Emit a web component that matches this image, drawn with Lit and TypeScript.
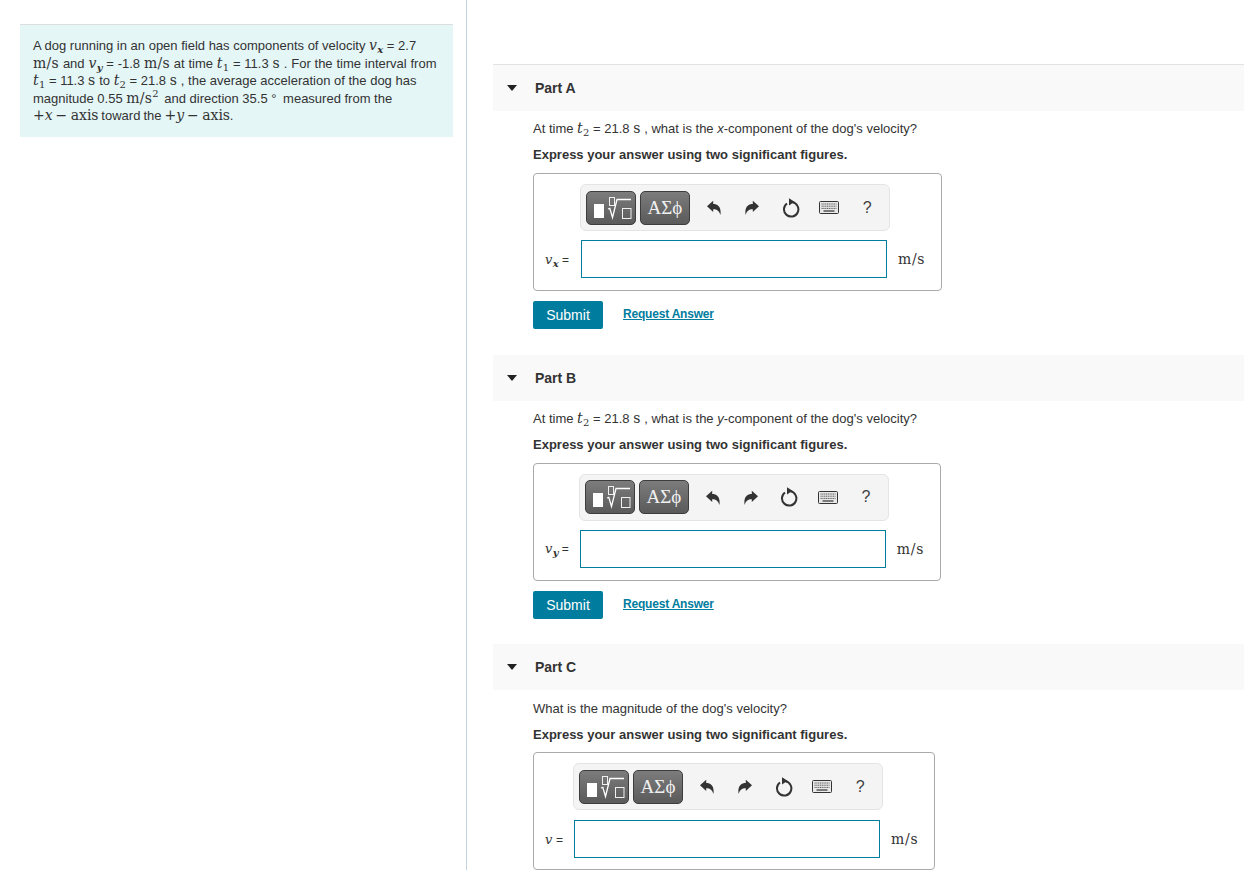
import { LitElement, html, css, svg } from "lit";
import { customElement, property } from "lit/decorators.js";

const mi = (t: string, sub?: string) =>
  html`<span class="m i">${t}${sub ? html`<sub class=${/[xy]/.test(sub) ? "si" : "sn"}>${sub}</sub>` : ""}</span>`;
const mr = (t: string) => html`<span class="m">${t}</span>`;

const mathStyles = css`
  .m { font-family: "DejaVu Serif", serif; font-size: 14px; letter-spacing: 0.3px; color: #333; }
  .i { font-style: italic; }
  sub { font-size: 10px; line-height: 0; vertical-align: -3px; font-style: normal; letter-spacing: 0; }
  sub.si { font-style: italic; font-weight: bold; }
  sup { font-family: "DejaVu Serif", serif; font-size: 10px; line-height: 0; vertical-align: 6px; margin-right: 2px; }
`;

@customElement("answer-box")
class AnswerBox extends LitElement {
  @property() sym = "";
  @property() sub = "";
  @property({ type: Boolean }) last = false;
  static styles = [mathStyles, css`
    :host { display: block; width: fit-content; }
    .box { display: grid; grid-template-columns: auto 306px auto; align-items: center;
      border: 1px solid #aaa; border-radius: 4px; padding: 10px 16px 12px 11px; height: 118px; box-sizing: border-box; }
    .box.last { padding-bottom: 11px; }
    .tb { grid-column: 2; grid-row: 1; margin: 0 -3px 9px -1px; height: 47px; box-sizing: border-box; background: #f4f4f4;
      border: 1px solid #e4e4e4; border-radius: 6px; display: flex; align-items: center; padding-left: 5px; }
    .box.last .tb { margin-bottom: 10px; }
    .btn { flex: none; width: 50px; height: 34px; box-sizing: border-box; margin-right: 4px; border: 1px solid #3d3d3d; border-radius: 5px;
      background: linear-gradient(#7c7c7c, #5a5a5a); display: flex; align-items: center; justify-content: center;
      color: #f0f0f0; font-family: "Liberation Serif", serif; font-size: 19px; }
    .tools { display: flex; flex: none; margin-left: 1px; }
    .tool { flex: none; width: 38.25px; height: 34px; display: flex; align-items: center; justify-content: center;
      color: #3f3f3f; font: 16px "Liberation Sans", sans-serif; }
    .label { grid-column: 1; grid-row: 2; padding-right: 11px; font: 12px "Liberation Sans", sans-serif; color: #333; white-space: nowrap; }
    .label.wide { padding-right: 12px; }
    .label .m { font-size: 13px; }
    input { grid-column: 2; grid-row: 2; display: block; width: 100%; height: 38px; box-sizing: border-box; border: 1px solid #007c9e; outline: none; background: #fff; margin: 0; border-radius: 0; }
    .unit { grid-column: 3; grid-row: 2; padding-left: 11px; white-space: nowrap; }
    .unit .m { letter-spacing: 0.7px; }
    svg { display: block; }
  `];
  render() {
    const arrow = svg`<path d="M0 6.2 6.2 .8v3.1C11 3.9 14.6 7.2 13.4 15 12.4 11.2 10.2 9.2 6.2 9.2v2.9z" fill="#333"/>`;
    return html`<div class="box ${this.last ? "last" : ""}">
      <div class="tb">
        <div class="btn"><svg width="44" height="28" viewBox="0 0 44 28" fill="none">
          <rect x="5" y="10" width="10" height="14" fill="#fff"/>
          <rect x="20.5" y="3.5" width="5" height="8" stroke="#f0f0f0"/>
          <path d="M19 15l1.800-.6 2.700 9.100 4.500-18h14" stroke="#fff" stroke-width="1.300"/>
          <rect x="33.500" y="14.500" width="8.500" height="10" stroke="#f0f0f0"/>
        </svg></div>
        <div class="btn">ΑΣϕ</div>
        <div class="tools">
          <div class="tool"><svg width="14" height="15" viewBox="0 0 14 15">${arrow}</svg></div>
          <div class="tool"><svg width="14" height="15" viewBox="0 0 14 15"><g transform="translate(14 0) scale(-1 1)">${arrow}</g></svg></div>
          <div class="tool"><svg width="18" height="20" viewBox="0 0 18 20" fill="none">
            <path d="M5 5.500a7.200 7.200 0 1 0 5.500-1.200" stroke="#333" stroke-width="2"/>
            <path d="M7 .3 12.500 3.800 7 7.500z" fill="#333"/>
          </svg></div>
          <div class="tool"><svg width="20" height="13" viewBox="0 0 20 13">
            <rect x=".5" y=".5" width="19" height="12" rx="1" fill="#e9e9e9" stroke="#333"/>
            <path d="M2.500 3h15M2.500 5.200h15M2.500 7.400h15" stroke="#555" stroke-dasharray="1.200 .6"/>
            <path d="M4.500 10h11" stroke="#555" stroke-width="1.500"/>
          </svg></div>
          <div class="tool">?</div>
        </div>
      </div>
      <div class="label ${this.sub === "x" ? "wide" : ""}">${mi(this.sym, this.sub || undefined)} =</div>
      <input type="text" aria-label="answer" />
      <div class="unit"><span class="m">m/s</span></div>
    </div>`;
  }
}

@customElement("part-section")
class PartSection extends LitElement {
  @property() name = "";
  @property({ attribute: false }) question: unknown = "";
  @property() sym = "";
  @property() sub = "";
  @property({ type: Boolean }) last = false;
  static styles = [mathStyles, css`
    :host { display: block; font: 13px "Liberation Sans", sans-serif; color: #333; }
    .head { height: 46px; background: #f9f9f9; display: flex; align-items: center; }
    .tri { width: 0; height: 0; margin-left: 14px; border-left: 5.5px solid transparent; border-right: 5.5px solid transparent; border-top: 6px solid #222; }
    .name { margin-left: 18px; font-weight: bold; font-size: 14px; }
    .body { padding: 9px 0 0 40px; }
    .body.last { padding-top: 10px; }
    .q { line-height: 17px; margin: 0; height: 17px; white-space: nowrap; }
    .ex { line-height: 17px; margin: 9px 0 10px; font-weight: bold; font-size: 13px; }
    .body.last .ex { margin-bottom: 9px; }
    .actions { display: flex; align-items: center; margin-top: 10px; }
    .sub { width: 70px; height: 28px; border: 0; border-radius: 2px; background: #007c9e; color: #fff; font: 14px "Liberation Sans", sans-serif; padding: 0; }
    a { margin-left: 20px; margin-top: -2px; color: #007c9e; font-weight: bold; font-size: 12px; letter-spacing: -0.2px; text-decoration: underline; }
  `];
  render() {
    return html`<div class="head"><span class="tri"></span><span class="name">${this.name}</span></div>
      <div class="body ${this.last ? "last" : ""}">
        <p class="q">${this.question}</p>
        <p class="ex">Express your answer using two significant figures.</p>
        <answer-box .sym=${this.sym} .sub=${this.sub} .last=${this.last}></answer-box>
        ${this.last ? "" : html`<div class="actions"><button class="sub">Submit</button><a href="#">Request Answer</a></div>`}
      </div>`;
  }
}

@customElement("app-root")
class AppRoot extends LitElement {
  static styles = [mathStyles, css`
    :host { display: flex; height: 870px; overflow: hidden; font: 13px "Liberation Sans", sans-serif; color: #333; }
    .left { width: 466px; flex: none; box-sizing: content-box; border-right: 1px solid #c5d3df; padding: 24px 0 0 0; }
    .info { margin: 0 13px 0 20px; border-top: 1px solid #ddd; background: #e5f6f7; padding: 12px 13px 13px; height: 113px; box-sizing: border-box; line-height: 17.5px; white-space: nowrap; }
    .right { flex: 1; padding: 64px 0 0 26px; min-width: 0; }
    .rule { border-top: 1px solid #e2e2e2; }
    part-section + part-section { margin-top: 25.5px; }
    .line { display: block; height: 17.5px; }
    .l2 { word-spacing: 0.2px; }
    .l5 .m { letter-spacing: -0.1px; }
    .l5 { word-spacing: -0.6px; }
    .deg { margin-right: 3px; }
  `];
  render() {
    const q = (axis: string) => html`At time ${mi("t", "2")} = 21.8 ${mr("s")} , what is the <i>${axis}</i>-component of the dog's velocity?`;
    return html`<div class="left"><div class="info">
        <span class="line">A dog running in an open field has components of velocity ${mi("v", "x")} = 2.7</span>
        <span class="line l2">${mr("m/s")} and ${mi("v", "y")} = -1.8 ${mr("m/s")} at time ${mi("t", "1")} = 11.3 ${mr("s")} . For the time interval from</span>
        <span class="line">${mi("t", "1")} = 11.3 ${mr("s")} to ${mi("t", "2")} = 21.8 ${mr("s")} , the average acceleration of the dog has</span>
        <span class="line">magnitude 0.55 ${mr("m/s")}<sup>2</sup> and direction 35.5 <span class="deg">°</span> measured from the</span>
        <span class="line l5">${mr("+")}${mi("x")} ${mr("− axis")} toward the ${mr("+")}${mi("y")} ${mr("− axis")}.</span>
      </div></div>
      <div class="right"><div class="rule">
        <part-section name="Part A" .question=${q("x")} sym="v" sub="x"></part-section>
        <part-section name="Part B" .question=${q("y")} sym="v" sub="y"></part-section>
        <part-section name="Part C" .question=${"What is the magnitude of the dog's velocity?"} sym="v" last></part-section>
      </div></div>`;
  }
}
